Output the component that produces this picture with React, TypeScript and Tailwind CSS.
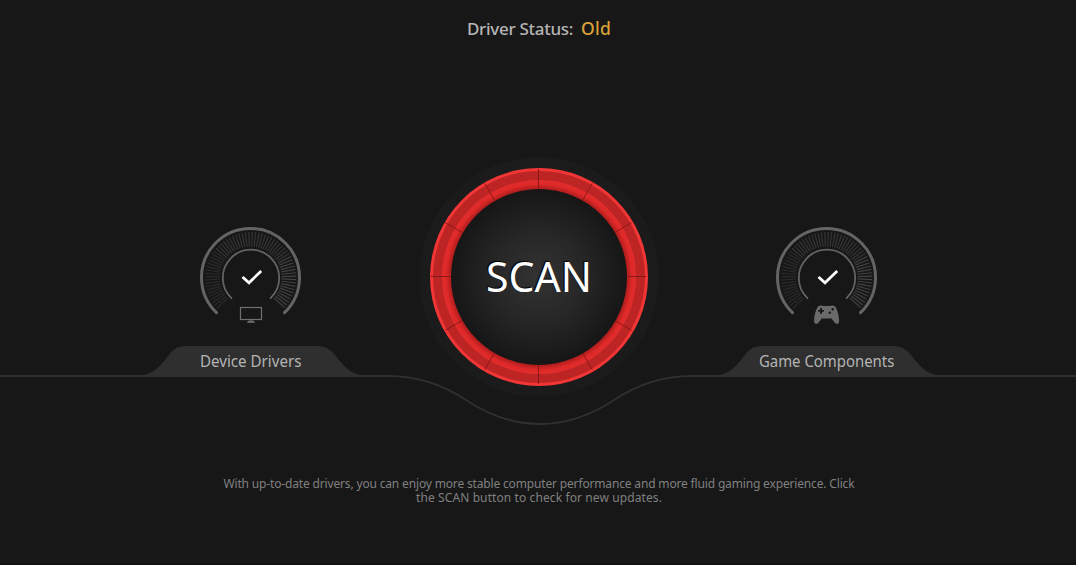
import type { ReactNode } from "react";

const polar = (cx: number, cy: number, r: number, deg: number) => {
  const a = (deg * Math.PI) / 180;
  return { x: cx + r * Math.cos(a), y: cy + r * Math.sin(a) };
};

// 270 degree arc, open at the bottom
const arcPath = (cx: number, cy: number, r: number) => {
  const from = polar(cx, cy, r, 134);
  const to = polar(cx, cy, r, 46);
  return `M${from.x} ${from.y}A${r} ${r} 0 1 1 ${to.x} ${to.y}`;
};

const TICKS = Array.from({ length: 62 }, (_, i) => 138 + i * 4.32);
const DIVIDERS = Array.from({ length: 12 }, (_, i) => i * 30);

const MonitorIcon = () => (
  <g>
    <rect x="41.5" y="81.5" width="21" height="12" fill="none" stroke="#707070" strokeWidth="1.2" />
    <path d="M50 94.5h4l2.5 2.3h-9z" fill="#707070" />
  </g>
);

const GamepadIcon = () => (
  <g>
    <path
      d="M43.3 80.2c1.2-.9 3.9-1 5.1-.2h6.4c1.3-.8 3.9-.7 5.1.2 2.3 2.5 4.3 9.7 4.2 15-.1 3.1-2.9 3.5-4.3 1.6l-3.3-4.2h-9.8l-3.3 4.2c-1.5 1.9-4.2 1.5-4.3-1.6-.1-5.3 1.9-12.5 4.2-15z"
      fill="#6a6a6a"
    />
    <path d="M45.1 82h1.900v1.900h1.900v1.900H47v1.900h-1.900v-1.900h-1.900v-1.900h1.900z" fill="#171717" />
    <circle cx="57.7" cy="83.3" r="1.2" fill="#171717" />
    <circle cx="54.8" cy="86.7" r="1.2" fill="#171717" />
  </g>
);

const Gauge = ({ children }: { children: ReactNode }) => (
  <svg className="h-[100px] w-[102px] shrink-0" viewBox="0 0 102 100" fill="none">
    {TICKS.map((deg) => {
      const a = polar(51.7, 51.5, 31, deg);
      const b = polar(51.7, 51.5, 45.5, deg);
      return (
        <line
          key={deg}
          x1={a.x}
          y1={a.y}
          x2={b.x}
          y2={b.y}
          stroke={deg > 330 ? "#424242" : deg > 220 ? "#353535" : "#2b2b2b"}
          strokeWidth="1.2"
        />
      );
    })}
    <path d={arcPath(51.5, 51.4, 49)} stroke="#646464" strokeWidth="3" strokeLinecap="round" />
    <path d={arcPath(52, 51.9, 28.2)} stroke="#646464" strokeWidth="1.8" strokeLinecap="round" />
    <path d="M43.5 51l6.5 5.8L62.2 45" stroke="#fff" strokeWidth="2.7" />
    {children}
  </svg>
);

const Station = ({ label, children }: { label: ReactNode; children: ReactNode }) => (
  <div className="flex w-[224px] flex-col items-center pt-[76px]">
    <Gauge>{children}</Gauge>
    <div className="relative mt-[20px] flex h-[31px] w-full items-center justify-center pb-[2px] pl-[1px]">
      <svg className="absolute inset-0 h-full w-full overflow-visible" viewBox="0 0 224 31">
        <path
          d="M-3 29.5C14 29.5 19 23 27 14C34 5 37 0 48 0H179C190 0 194 5 201 14C209 23 214 29.5 230 29.5V31H-3z"
          fill="#2f2f2f"
        />
      </svg>
      {label}
    </div>
  </div>
);

const ScanButton = () => (
  <button className="relative mt-[6px] ml-[2px] flex h-[242px] w-[242px] shrink-0 items-center justify-center">
    <svg className="absolute inset-0 h-full w-full" viewBox="0 0 242 242" fill="none">
      <defs>
        <radialGradient id="face">
          <stop offset="0" stopColor="#333333" />
          <stop offset="0.5" stopColor="#272727" />
          <stop offset="1" stopColor="#161616" />
        </radialGradient>
        <radialGradient id="bevel" gradientUnits="userSpaceOnUse" cx="121" cy="121" r="98">
          <stop offset="0.9" stopColor="#b01d1d" />
          <stop offset="0.95" stopColor="#df2929" />
          <stop offset="1" stopColor="#e42e2e" />
        </radialGradient>
      </defs>
      <circle cx="121" cy="121" r="120" fill="#1b1b1b" />
      <circle cx="121" cy="121" r="109" fill="#f23636" />
      <circle cx="121" cy="121" r="106" fill="#bd2424" />
      <circle cx="121" cy="121" r="97" fill="url(#bevel)" />
      {DIVIDERS.map((deg) => {
        const a = polar(120.5, 120.5, 88, deg);
        const b = polar(120.5, 120.5, 107.5, deg);
        return <line key={deg} x1={a.x} y1={a.y} x2={b.x} y2={b.y} stroke="#8a1717" strokeWidth="1" />;
      })}
      <circle cx="121" cy="121" r="88" fill="url(#face)" />
    </svg>
    <span className="relative -mt-[2px] text-[41px] leading-none text-white [text-shadow:-1px_-1px_1px_#000]">
      SCAN
    </span>
  </button>
);

export default function App() {
  return (
    <main className="flex h-[565px] w-[1076px] flex-col overflow-hidden border-b-2 border-[#120f10] bg-[#171717] font-['Noto_Sans',sans-serif]">
      <header className="flex h-[58px] items-center justify-center gap-[8px] pl-[2px] font-medium">
        <span className="text-[17px] tracking-[-0.29px] text-[#b4b4b4]">Driver Status:</span>
        <span className="pb-[2px] text-[17.5px] tracking-[0.2px] text-[#d9a138]">Old</span>
      </header>

      <section className="relative mt-[92px] flex h-[280px] shrink-0 items-start justify-between px-[138px]">
        <svg className="absolute inset-0 h-full w-full" viewBox="0 0 1076 280" fill="none">
          <path
            d="M0 226H388C420 226 445 236 466 250C490 266 513 274 540 274C567 274 590 266 614 250C635 236 660 226 692 226H1076"
            stroke="#2f2f2f"
            strokeWidth="2"
          />
        </svg>
        <Station
          label={
            <span className="relative scale-x-[0.945] whitespace-nowrap text-[16px] leading-none text-[#b4b4b4]">
              Device Drivers
            </span>
          }
        >
          <MonitorIcon />
        </Station>
        <ScanButton />
        <Station
          label={
            <span className="relative scale-x-[0.932] whitespace-nowrap text-[16px] leading-none text-[#b4b4b4]">
              Game Components
            </span>
          }
        >
          <GamepadIcon />
        </Station>
      </section>

      <div className="mt-[47px] flex flex-col items-center whitespace-nowrap pl-[2px] text-[12px] leading-[14px] text-[#808080]">
        <p className="tracking-[-0.16px]">
          With up-to-date drivers, you can enjoy more stable computer performance and more fluid gaming experience. Click
        </p>
        <p className="tracking-[0.1px]">the SCAN button to check for new updates.</p>
      </div>
    </main>
  );
}
